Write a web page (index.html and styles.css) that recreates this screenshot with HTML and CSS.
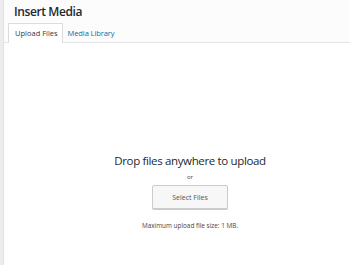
FILE: index.html
```html
<!DOCTYPE html>
<html>
<head>
<meta charset="utf-8">
<link rel="stylesheet" href="styles.css">
</head>
<body>
<div class="frame">
  <div class="edge"></div>
  <div class="modal">
    <div class="header">
      <h1 class="title">Insert Media</h1>
      <div class="tabs">
        <span class="tab active">Upload Files</span>
        <span class="tab link">Media Library</span>
      </div>
    </div>
    <div class="content">
      <div class="uploader">
        <p class="drop">Drop files anywhere to upload</p>
        <p class="or">or</p>
        <button class="button">Select Files</button>
        <p class="max">Maximum upload file size: 1 MB.</p>
      </div>
    </div>
  </div>
</div>
</body>
</html>
```
FILE: styles.css
```css
html, body {
  margin: 0;
  padding: 0;
  background: #fff;
  font-family: "Open Sans", "Liberation Sans", sans-serif;
  color: #23282d;
}
.frame {
  display: flex;
  width: 350px;
  height: 265px;
}
.edge {
  width: 3px;
  background: #ececec;
  border-right: 1px solid #e2e2e2;
}
.modal {
  flex: 1;
  display: flex;
  flex-direction: column;
}
.header {
  background: #fcfcfc;
  border-bottom: 1px solid #e5e5e5;
  height: 42px;
  display: flex;
  flex-direction: column;
  justify-content: space-between;
}
.title {
  margin: 0;
  padding: 4px 0 0 10px;
  font-size: 12px;
  font-weight: 600;
  line-height: 16px;
  letter-spacing: -0.4px;
}
.tabs {
  display: flex;
  padding-left: 4px;
  margin-bottom: -1px;
}
.tab {
  font-size: 7.5px;
  line-height: 19px;
  padding: 0 5px 0 6px;
  border: 1px solid transparent;
  border-bottom: none;
}
.tab.active {
  background: #fff;
  border-color: #dcdcdc;
  color: #32373c;
  padding-right: 4px;
}
.tab.link {
  color: #0073aa;
  padding-left: 4px;
  letter-spacing: -0.1px;
}
.content {
  flex: 1;
  display: flex;
  justify-content: center;
  padding-left: 26px;
}
.uploader {
  display: flex;
  flex-direction: column;
  align-items: center;
  padding-top: 111px;
}
.drop {
  margin: 0;
  font-size: 11.5px;
  line-height: 14px;
  letter-spacing: -0.35px;
}
.or {
  margin: 5px 0 0;
  font-size: 6px;
  line-height: 8px;
  color: #444;
}
.button {
  margin-top: 4px;
  width: 76px;
  height: 24px;
  background: #f7f7f7;
  border: 1px solid #cccccc;
  border-radius: 2px;
  box-shadow: 0 1px 0 #cccccc;
  font-family: "Open Sans", "Liberation Sans", sans-serif;
  font-size: 7px;
  color: #555;
  padding: 0;
}
.max {
  margin: 13px 0 0;
  font-size: 6.4px;
  line-height: 8px;
  color: #444;
}
```
